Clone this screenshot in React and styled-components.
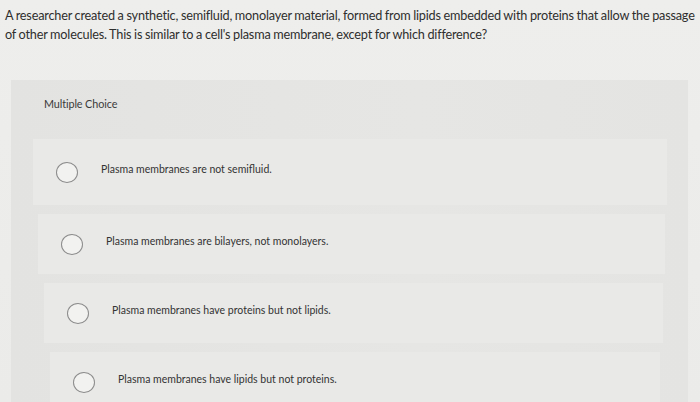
import React from "react";
import styled, { createGlobalStyle } from "styled-components";

const Global = createGlobalStyle`
  html, body { margin: 0; padding: 0; }
  body {
    width: 700px;
    height: 402px;
    overflow: hidden;
    background: linear-gradient(180deg, #eeeeec 0%, #ebebe9 100%);
    font-family: Lato, "Open Sans", "Liberation Sans", sans-serif;
  }
`;

const Page = styled.div`
  display: flex;
  flex-direction: column;
  height: 402px;
  overflow: hidden;
`;

const Question = styled.p`
  margin: 0;
  padding: 6px 2px 0 5px;
  font-size: 12.7px;
  line-height: 19px;
  color: #2e2e2e;
  letter-spacing: -0.2px;
  word-spacing: -0.3px;
`;

const Panel = styled.section`
  margin: 36px 12px 0 11px;
  flex: 1;
  background: linear-gradient(90deg, #e3e3e1 0%, #e6e6e4 60%, #e4e4e2 100%);
  display: flex;
  flex-direction: column;
  padding: 14px 0 0 0;
`;

const Label = styled.div`
  padding-left: 33px;
  font-size: 10.8px;
  color: #3a3a3a;
  height: 20px;
  line-height: 20px;
  letter-spacing: -0.1px;
`;

const Options = styled.div`
  display: flex;
  flex-direction: column;
  gap: 9px;
  margin-top: 25px;
`;

const Card = styled.label`
  display: flex;
  align-items: center;
  height: ${(p) => p.$h}px;
  margin-left: ${(p) => p.$shift}px;
  margin-right: ${(p) => 21 + (p.$shift - 22) * 0.4}px;
  background: #e9e9e7;
  padding-left: 23px;
`;

const Radio = styled.span`
  width: 22px;
  height: 21px;
  border-radius: 50%;
  border: 1.3px solid #8c8c8c;
  background: #f2f2f0;
  box-sizing: border-box;
  flex: none;
`;

const OptionText = styled.span`
  margin-left: 23px;
  margin-top: -6px;
  font-size: 10.5px;
  color: #333;
`;

const options = [
  { text: "Plasma membranes are not semifluid.", shift: 22, h: 66 },
  { text: "Plasma membranes are bilayers, not monolayers.", shift: 27, h: 60 },
  { text: "Plasma membranes have proteins but not lipids.", shift: 33, h: 60 },
  { text: "Plasma membranes have lipids but not proteins.", shift: 39, h: 60 },
];

export default function App() {
  return (
    <>
      <Global />
      <Page>
        <Question>
          A researcher created a synthetic, semifluid, monolayer material, formed from lipids embedded with proteins that allow the passage of other molecules. This is similar to a cell's plasma membrane, except for which difference?
        </Question>
        <Panel>
          <Label>Multiple Choice</Label>
          <Options>
            {options.map((o) => (
              <Card key={o.text} $shift={o.shift} $h={o.h}>
                <Radio />
                <OptionText>{o.text}</OptionText>
              </Card>
            ))}
          </Options>
        </Panel>
      </Page>
    </>
  );
}
